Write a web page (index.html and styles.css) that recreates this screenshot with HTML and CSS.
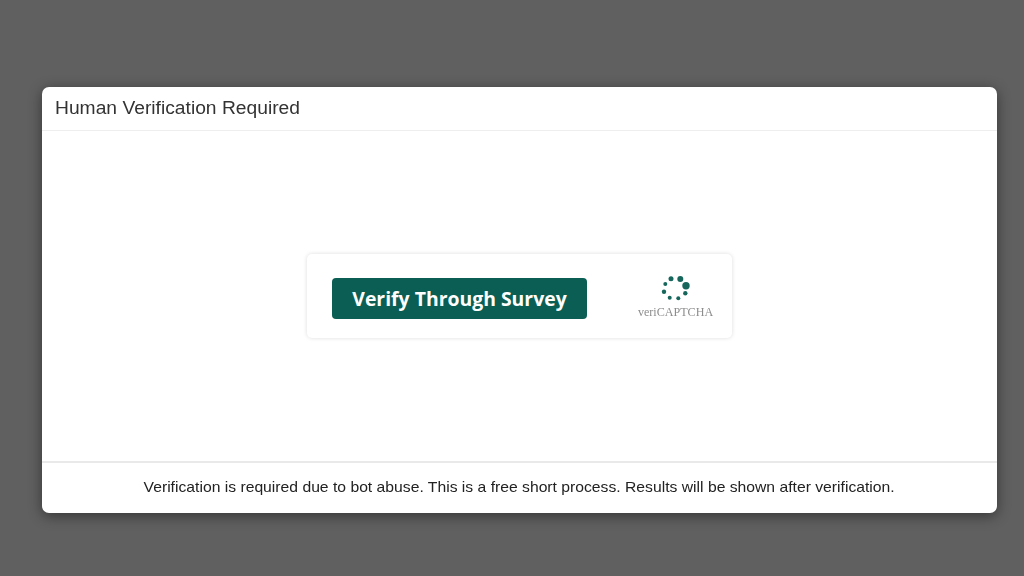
FILE: index.html
```html
<!DOCTYPE html>
<html lang="en">
<head>
<meta charset="utf-8">
<title>Human Verification Required</title>
<link rel="stylesheet" href="styles.css">
</head>
<body>
<div class="modal">
  <header class="modal-header"><span class="title">Human Verification Required</span></header>
  <main class="modal-body">
    <div class="captcha">
      <a class="verify-btn">Verify Through Survey</a>
      <div class="brand">
        <svg class="spinner" width="32" height="28" viewBox="0 0 32 28">
          <circle class="dot" cx="11" cy="4.7" r="2.5"/>
          <circle class="dot" cx="20.3" cy="5" r="3"/>
          <circle class="dot" cx="26" cy="11.7" r="3.7"/>
          <circle class="dot" cx="25.3" cy="19.3" r="2.2"/>
          <circle class="dot" cx="18.3" cy="24.3" r="2"/>
          <circle class="dot" cx="9.7" cy="23.7" r="2"/>
          <circle class="dot" cx="4" cy="17.7" r="2.2"/>
          <circle class="dot" cx="5.3" cy="10" r="2"/>
        </svg>
        <span class="brand-name">veriCAPTCHA</span>
      </div>
    </div>
  </main>
  <footer class="modal-footer"><span class="note">Verification is required due to bot abuse. This is a free short process. Results will be shown after verification.</span></footer>
</div>
</body>
</html>
```

FILE: styles.css
```css
* { box-sizing: border-box; }
html, body { height: 100%; }
body {
  margin: 0;
  background: #606060;
  padding: 87px 27px 63px 42px;
  font-family: "Liberation Sans", Arial, sans-serif;
}
.modal {
  height: 426px;
  background: #fff;
  border-radius: 7px;
  box-shadow: 0 3px 14px rgba(0, 0, 0, 0.45);
  display: flex;
  flex-direction: column;
  overflow: hidden;
}
.modal-header {
  height: 44px;
  padding: 11px 13px 0;
  line-height: 20px;
  border-bottom: 1px solid #eee;
}
.title {
  display: inline-block;
  font-size: 17.5px;
  color: #333;
  transform: scaleX(1.1);
  transform-origin: left center;
  filter: blur(0.4px);
}
.modal-body {
  flex: 1;
  display: flex;
  justify-content: center;
  padding-top: 123px;
}
.captcha {
  width: 425px;
  height: 84px;
  background: #fff;
  border-radius: 5px;
  box-shadow: 0 0 4px rgba(0, 0, 0, 0.14);
  display: flex;
  align-items: flex-start;
  padding: 24px 18px 0 25px;
  justify-content: space-between;
  filter: blur(0.5px);
}
.verify-btn {
  width: 255px;
  height: 41px;
  background: #0a5e53;
  border-radius: 4px;
  color: #fff;
  font-family: "Open Sans", sans-serif;
  font-weight: 700;
  font-size: 19.4px;
  line-height: 41px;
  text-align: center;
}
.brand {
  display: flex;
  flex-direction: column;
  align-items: center;
  width: 76px;
  margin-top: -4px;
}
.spinner { display: block; }
.dot { fill: #17665c; }
.brand-name {
  font-family: "Liberation Serif", serif;
  font-size: 12.1px;
  line-height: 13px;
  color: #8d8d8d;
  margin-top: 4px;
  margin-right: 1px;
}
.modal-footer {
  height: 52px;
  border-top: 2px solid #e9e9e9;
  text-align: center;
  padding-top: 15px;
  line-height: 17px;
}
.note {
  display: inline-block;
  font-size: 14.1px;
  color: #222;
  transform: scaleX(1.114);
  filter: blur(0.3px);
}
```
